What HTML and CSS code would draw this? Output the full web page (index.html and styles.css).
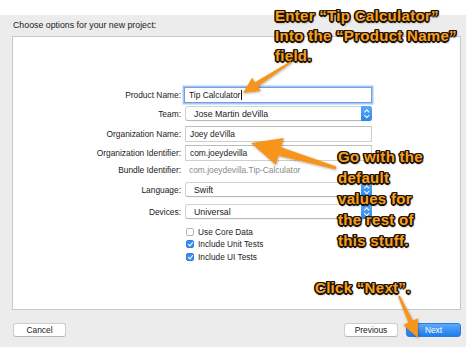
FILE: index.html
```html
<!DOCTYPE html>
<html>
<head>
<meta charset="utf-8">
<link rel="stylesheet" href="styles.css">
</head>
<body>
<div class="page">
  <div class="topstrip"></div>
  <div class="panel">
    <div class="title">Choose options for your new project:</div>
    <div class="box">
      <div class="form">
        <div class="row">
          <div class="label">Product Name:</div>
          <div class="field focus">Tip Calculator<span class="caret"></span></div>
        </div>
        <div class="row m3 h15">
          <div class="label">Team:</div>
          <div class="popup">Jose Martin deVilla<span class="stepper"><span class="up"></span><span class="down"></span></span></div>
        </div>
        <div class="row m5">
          <div class="label">Organization Name:</div>
          <div class="field">Joey deVilla</div>
        </div>
        <div class="row m3">
          <div class="label">Organization Identifier:</div>
          <div class="field">com.joeydevilla</div>
        </div>
        <div class="row m2 h14">
          <div class="label">Bundle Identifier:</div>
          <div class="plain">com.joeydevilla.Tip-Calculator</div>
        </div>
        <div class="row m5 h15">
          <div class="label">Language:</div>
          <div class="popup">Swift<span class="stepper"><span class="up"></span><span class="down"></span></span></div>
        </div>
        <div class="row m7 h15">
          <div class="label">Devices:</div>
          <div class="popup">Universal<span class="stepper"><span class="up"></span><span class="down"></span></span></div>
        </div>
        <div class="row m7 h12">
          <div class="label"></div>
          <div class="check"><span class="cb"></span>Use Core Data</div>
        </div>
        <div class="row h12">
          <div class="label"></div>
          <div class="check"><span class="cb on"></span>Include Unit Tests</div>
        </div>
        <div class="row m1 h12">
          <div class="label"></div>
          <div class="check"><span class="cb on"></span>Include UI Tests</div>
        </div>
      </div>
    </div>
    <div class="footer">
      <div class="btn cancel">Cancel</div>
      <div class="spacer"></div>
      <div class="btn prev">Previous</div>
      <div class="btn next">Next</div>
    </div>
  </div>

  <div class="note note1">Enter “Tip Calculator”<br>Into the “Product Name”<br>field.</div>
  <div class="note note2">Go with the<br>default<br>values for<br>the rest of<br>this stuff.</div>
  <div class="note note3">Click “Next”.</div>

  <svg class="arrows" width="474" height="349" viewBox="0 0 474 349">
    <defs>
      <filter id="sh" x="-20%" y="-20%" width="140%" height="140%">
        <feDropShadow dx="0.5" dy="0.8" stdDeviation="0.8" flood-color="#000" flood-opacity="0.35"/>
      </filter>
    </defs>
    <g fill="#f7941d" filter="url(#sh)">
      <polygon points="291.5,62.8 257.8,86.5 260.7,91.1 243,93 252.1,77.7 255.0,82.3 290.5,61.2"/>
      <polygon points="336.4,166.6 281.1,147.2 283.7,138.1 251,143 275.9,164.9 278.5,155.8 335.6,169.4"/>
      <polygon points="399.9,295.6 412.9,320.6 417.9,318.3 418,338 403.3,324.9 408.3,322.6 398.1,296.4"/>
    </g>
  </svg>
</div>
</body>
</html>
```

FILE: styles.css
```css
* { box-sizing: border-box; }
html, body { margin: 0; padding: 0; background: #fff; }
body { font-family: "Liberation Sans", Arial, sans-serif; color: #1e1e1e; }

.page { position: relative; width: 474px; height: 349px; overflow: hidden; }
.topstrip { height: 15px; }
.panel {
  width: 466px;
  height: 332px;
  background: #ececec;
  display: flex;
  flex-direction: column;
}
.title {
  height: 21px;
  line-height: 21px;
  padding-left: 13px;
  font-size: 8.8px;
  color: #222;
}
.box {
  margin-left: 12px;
  width: 449px;
  height: 274px;
  background: #fff;
  border: 1px solid #c8c8c8;
}
.form { padding-top: 50px; display: flex; flex-direction: column; }
.row {
  display: grid;
  grid-template-columns: 168px 187px;
  column-gap: 4px;
  height: 16px;
  align-items: center;
  font-size: 8.4px;
}
.h15 { height: 15px; }
.h14 { height: 14px; }
.h12 { height: 12px; }
.m1 { margin-top: 1px; }
.m2 { margin-top: 2px; }
.m3 { margin-top: 3px; }
.m5 { margin-top: 5px; }
.m7 { margin-top: 7px; }
.label { text-align: right; color: #222; }
.field {
  height: 100%;
  border: 1px solid #cfcfcf;
  border-top-color: #bdbdbd;
  background: #fff;
  padding-left: 4px;
  display: flex;
  align-items: center;
  color: #1a1a1a;
}
.field.focus {
  border: 1px solid #6d9fe6;
  box-shadow: 0 0 0 1.5px #a8c7f3;
  margin-left: -1px;
}
.caret { display: inline-block; width: 1px; height: 10px; background: #111; margin-left: 0.5px; }
.plain { color: #8a8a8a; padding-left: 4px; }
.popup {
  position: relative;
  height: 100%;
  border: 1px solid #d2d2d2;
  border-bottom-color: #b9b9b9;
  border-radius: 3px;
  background: #fff;
  padding-left: 8px;
  display: flex;
  align-items: center;
  font-size: 8.8px;
  color: #1a1a1a;
  box-shadow: 0 0.5px 0.5px rgba(0,0,0,0.08);
}
.stepper {
  position: absolute;
  right: -1px;
  top: -1px;
  bottom: -1px;
  width: 11px;
  border-radius: 0 3px 3px 0;
  background: linear-gradient(#5ea9f7, #2a86f0);
  display: flex;
  flex-direction: column;
  align-items: center;
  justify-content: center;
  gap: 2px;
}
.stepper .up, .stepper .down {
  width: 3.5px;
  height: 3.5px;
  border-left: 1px solid #fff;
  border-top: 1px solid #fff;
}
.stepper .up { transform: translateY(1px) rotate(45deg); }
.stepper .down { transform: translateY(-1px) rotate(225deg); }
.check { display: flex; align-items: center; gap: 4px; color: #222; font-size: 8.3px; padding-left: 1px; }
.cb {
  width: 8px; height: 8px;
  border: 1px solid #b5b5b5;
  border-radius: 2px;
  background: #fff;
  position: relative;
}
.cb.on { background: #3a8ef2; border-color: #2f7fe0; }
.cb.on::after {
  content: "";
  position: absolute;
  left: 2px; top: 0px;
  width: 2px; height: 4px;
  border-right: 1.2px solid #fff;
  border-bottom: 1.2px solid #fff;
  transform: rotate(40deg);
}
.footer {
  display: flex;
  margin-top: 13px;
  padding-left: 13px;
  padding-right: 5px;
  gap: 8px;
}
.spacer { flex: 1; }
.btn {
  height: 14px;
  border-radius: 3px;
  font-size: 8.4px;
  display: flex;
  align-items: center;
  justify-content: center;
  background: #fff;
  border: 1px solid #cdcdcd;
  border-bottom-color: #b5b5b5;
  color: #222;
}
.cancel { width: 53px; }
.prev { width: 54px; }
.next {
  width: 55px;
  background: linear-gradient(#5eaaf8, #1e7ceb);
  border-color: #2a7de4;
  color: #fff;
}

.note {
  position: absolute;
  font-family: "Liberation Sans", Arial, sans-serif;
  font-weight: bold;
  font-size: 15px;
  line-height: 21px;
  letter-spacing: 0.3px;
  color: #f8a01e;
  white-space: nowrap;
  text-shadow:
    -1.2px -1.2px 0 #1b1209, 1.2px -1.2px 0 #1b1209,
    -1.2px 1.2px 0 #1b1209, 1.2px 1.2px 0 #1b1209,
    0 -1.5px 0 #1b1209, 0 1.5px 0 #1b1209,
    -1.5px 0 0 #1b1209, 1.5px 0 0 #1b1209,
    1px 2px 2px rgba(0,0,0,0.5);
}
.note1 { left: 275px; top: 6px; line-height: 20px; }
.note2 { left: 338px; top: 146px; }
.note3 { left: 315px; top: 277px; }
.arrows { position: absolute; left: 0; top: 0; pointer-events: none; }
```
